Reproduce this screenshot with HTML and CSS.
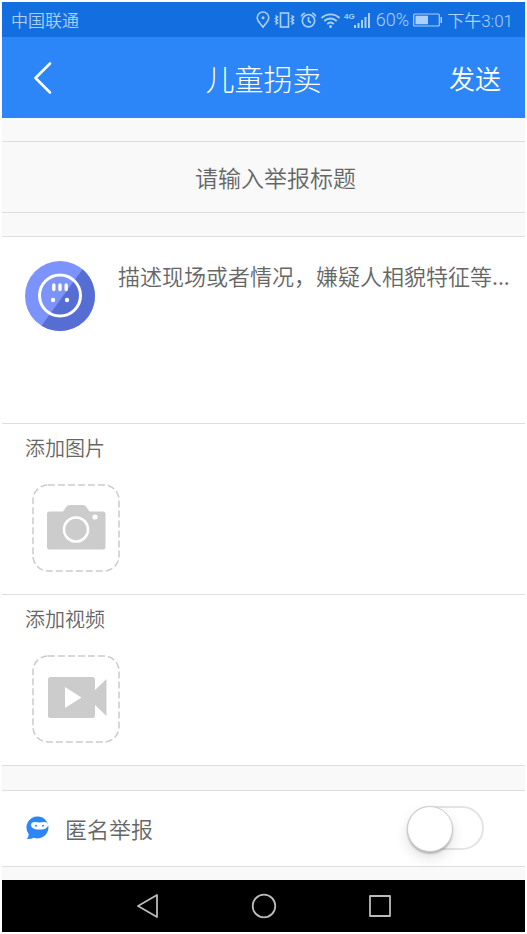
FILE: index.html
```html
<!DOCTYPE html>
<html lang="zh-CN">
<head>
<meta charset="utf-8">
<meta name="viewport" content="width=device-width, initial-scale=1">
<title>儿童拐卖</title>
<link rel="stylesheet" href="styles.css">
</head>
<body>
<div class="screen">
  <div class="status">
    <span>中国联通</span>
    <div class="status-info">
      <svg width="116" height="20" viewBox="0 0 116 20" fill="none" stroke="currentColor" stroke-width="1.6" aria-hidden="true">
        <path d="M7 17.200C4 13.500 1.200 10.800 1.200 7.800a5.800 5.800 0 0 1 11.600 0C12.800 10.800 10 13.500 7 17.200z"/>
        <circle cx="7" cy="7.800" r="1.500" fill="currentColor" stroke="none"/>
        <rect x="24.500" y="3" width="8" height="14"/>
        <path d="M19.500 5.500l2 1.500-2 1.500 2 1.500-2 1.500 2 1.500-2 1.500M35.500 5.500l2 1.500-2 1.500 2 1.500-2 1.500 2 1.500-2 1.500" stroke-width="1.500"/>
        <circle cx="52.500" cy="10.700" r="6.200"/>
        <path d="M52.500 7v4l2.500 1.800M45.200 6.500a6 6 0 0 1 3.600-3.600M59.800 6.500a6 6 0 0 0-3.600-3.600"/>
        <path d="M65.500 8a13 13 0 0 1 18 0M68.300 11a9 9 0 0 1 12.400 0M71.200 14a5 5 0 0 1 6.600 0" stroke-width="1.800"/>
        <circle cx="74.500" cy="16.500" r="1.500" fill="currentColor" stroke="none"/>
        <text class="network" x="88" y="9">4G</text>
        <path d="M99 15v3M102.500 13v5M106 10v8M109.500 7v11M113 3v15" stroke-width="2"/>
      </svg>
      <span class="percent">60%</span>
      <svg class="battery" width="30" height="20" viewBox="0 0 30 20" aria-hidden="true">
        <rect x="0.700" y="4" width="25.600" height="12" rx="1" fill="none" stroke="currentColor" stroke-width="1.200"/>
        <path fill="currentColor" d="M2.500 5.800h12.500v8.400H2.500zM27.500 7h1.500v6h-1.500z"/>
      </svg>
      <span>下午3:01</span>
    </div>
  </div>
  <header class="header">
    <button class="back" type="button" aria-label="返回">
      <svg width="20" height="34" viewBox="0 0 20 34" fill="none" stroke="currentColor" stroke-width="2.600" stroke-linecap="round" stroke-linejoin="round"><path d="M17 2.500L2.500 17 17 31.500"/></svg>
    </button>
    <h1>儿童拐卖</h1>
    <button class="send" type="submit" form="report">发送</button>
  </header>
  <form class="report" id="report">
    <div class="title-row">
      <input class="title-input" type="text" aria-label="举报标题" placeholder="请输入举报标题">
    </div>
    <div class="describe">
      <svg class="avatar" width="70" height="70" viewBox="0 0 70 70" aria-hidden="true">
        <circle cx="35" cy="35" r="35" fill="#7b93fa"/>
        <path fill="#566dd3" d="M57.500 8.200A35 35 0 0 1 16.500 64.700z"/>
        <circle cx="35" cy="34.500" r="20.500" fill="none" stroke="#fff" stroke-width="3"/>
        <path d="M28.800 24v4.500M35 24v4.500M41.200 24v4.500" stroke="#fff" stroke-width="3.400" stroke-linecap="round"/>
        <circle cx="28" cy="39" r="2.200" fill="#fff"/><circle cx="42" cy="39" r="2.200" fill="#fff"/>
      </svg>
      <textarea aria-label="描述" placeholder="描述现场或者情况，嫌疑人相貌特征等..."></textarea>
    </div>
    <section class="media">
      <h2>添加图片</h2>
      <button class="add" type="button" aria-label="添加图片">
        <svg width="88" height="88" viewBox="0 0 88 88">
          <rect class="dash" x="1" y="1" width="86" height="86" rx="15"/>
          <path fill="#ccc" d="M17 27.500h14l3.500-5q1-1.500 3-1.500h13.500q2 0 3 1.500l3.500 5H71q2.500 0 2.500 2.500v33q0 2.500-2.500 2.500H17.500Q15 65.500 15 63V30q0-2.500 2-2.500z"/>
          <circle cx="44" cy="45.500" r="12" fill="none" stroke="#fff" stroke-width="2.600"/>
          <circle cx="63" cy="33" r="2.600" fill="#fff"/>
        </svg>
      </button>
    </section>
    <section class="media">
      <h2>添加视频</h2>
      <button class="add" type="button" aria-label="添加视频">
        <svg width="88" height="88" viewBox="0 0 88 88">
          <rect class="dash" x="1" y="1" width="86" height="86" rx="15"/>
          <path fill="#ccc" d="M18.500 22h42Q63 22 63 24.500V35l11.500-11v37L63 50v10.500q0 2.500-2.500 2.500h-42Q16 63 16 60.500v-36Q16 22 18.500 22z"/>
          <path fill="#fff" d="M33 32v21l16.500-10.500z"/>
        </svg>
      </button>
    </section>
    <div class="anonymous">
      <svg width="24" height="24" viewBox="0 0 24 24" aria-hidden="true">
        <path fill="#2d86f8" d="M12.500.500a11 11 0 1 1-4.800 21.300Q4.500 23.500.800 23q2-2 1.900-5A11 11 0 0 1 12.500.500z"/>
        <path fill="#fff" d="M5 9Q5 6 9 6q4.500.800 9 0 4 0 4 3t-4.500 4.300q-4 .600-8 0Q5 12 5 9z"/>
        <circle cx="10" cy="9.800" r="1" fill="#2d86f8"/><circle cx="17" cy="9.800" r="1" fill="#2d86f8"/>
      </svg>
      <label for="anon">匿名举报</label>
      <input class="toggle" id="anon" type="checkbox" role="switch">
    </div>
  </form>
  <nav class="nav" aria-label="系统导航">
    <button type="button" aria-label="返回"><svg width="26" height="26" viewBox="0 0 26 26"><path d="M22 2v22L3 13z"/></svg></button>
    <button type="button" aria-label="主屏幕"><svg width="26" height="26" viewBox="0 0 26 26"><circle cx="13" cy="13" r="11.300"/></svg></button>
    <button type="button" aria-label="最近任务"><svg width="26" height="26" viewBox="0 0 26 26"><path d="M3 3h20v20H3z"/></svg></button>
  </nav>
</div>
</body>
</html>
```
FILE: styles.css
```css
* {
  box-sizing: border-box;
}

body {
  margin: 0;
  background: #fff;
  color: #666;
  font-family: "Noto Sans CJK SC", sans-serif;
  font-weight: 350;
}

button,
input,
textarea {
  margin: 0;
  padding: 0;
  border: 0;
  background: none;
  color: inherit;
  font: inherit;
}

svg {
  display: block;
  flex: none;
}

h1,
h2 {
  margin: 0;
  font-weight: inherit;
}

.screen {
  display: flex;
  flex-direction: column;
  min-height: 100vh;
  padding: 2px;
}

.status {
  display: flex;
  align-items: center;
  justify-content: space-between;
  height: 35px;
  padding: 0 12px 0 9px;
  background: #136fe0;
  color: #acd0fa;
  font-size: 17px;
}

.status-info {
  display: flex;
  align-items: center;
  gap: 4px;
  font-family: Roboto, "Noto Sans CJK SC", sans-serif;
}

.percent {
  font-size: 18px;
}

.network {
  fill: currentColor;
  stroke: none;
  font-family: "Liberation Sans", sans-serif;
  font-size: 8px;
  font-weight: 700;
}

.header {
  display: grid;
  grid-template-columns: 1fr auto 1fr;
  align-items: center;
  height: 81px;
  padding: 0 24px;
  background: #2d86f8;
  color: #fff;
}

.header h1 {
  font-size: 29px;
  font-weight: 300;
}

.back {
  justify-self: start;
  margin-left: 7px;
}

.send {
  justify-self: end;
  font-size: 26px;
}

.report {
  flex: 1;
  padding-top: 23px;
  background: #f9f9f9;
}

.title-row {
  border: solid #dedede;
  border-width: 1px 0;
  margin-bottom: 23px;
  padding-left: 24px;
}

.title-input {
  display: block;
  width: 100%;
  height: 70px;
  font-size: 23px;
  text-align: center;
}

::placeholder {
  color: #666;
  opacity: 1;
}

.describe {
  display: flex;
  gap: 23px;
  padding: 24px 0 24px 23px;
  border-top: 1px solid #dedede;
  background: #fff;
}

.describe textarea {
  flex: 1;
  min-width: 0;
  height: 138px;
  resize: none;
  font-size: 22px;
  line-height: 28px;
}

.media {
  padding: 12px 23px 22px;
  border-top: 1px solid #dedede;
  background: #fff;
}

.media:last-of-type {
  border-bottom: 1px solid #dedede;
}

.media h2 {
  font-size: 20px;
  line-height: 24px;
}

.add {
  display: block;
  margin: 24px 0 0 7px;
}

.dash {
  fill: none;
  stroke: #ccc;
  stroke-width: 1.5;
  stroke-dasharray: 7 3;
}

.anonymous {
  display: flex;
  align-items: center;
  height: 77px;
  margin-top: 24px;
  padding: 0 41px 1px 24px;
  border: solid #dedede;
  border-width: 1px 0;
  background: #fff;
  font-size: 22px;
}

.anonymous label {
  margin-left: 15px;
}

.toggle {
  appearance: none;
  width: 77px;
  height: 44px;
  margin-left: auto;
  border: 2px solid #e4e4e4;
  border-radius: 22px;
  background: #fff;
}

.toggle::before {
  content: "";
  display: block;
  width: 44px;
  height: 44px;
  margin: -2px;
  border: 1px solid #ccc;
  border-radius: 50%;
  background: #fff;
  box-shadow: 0 2px 2px rgba(0, 0, 0, 0.22), 0 6px 14px rgba(0, 0, 0, 0.12);
}

.toggle:checked {
  background: #2d86f8;
}

.toggle:checked::before {
  margin-left: 31px;
}

.nav {
  display: flex;
  justify-content: center;
  gap: 90px;
  padding: 13px 0;
  background: #000;
}

.nav svg {
  fill: none;
  stroke: #bbb;
  stroke-width: 1.8;
  stroke-linejoin: round;
}
```
